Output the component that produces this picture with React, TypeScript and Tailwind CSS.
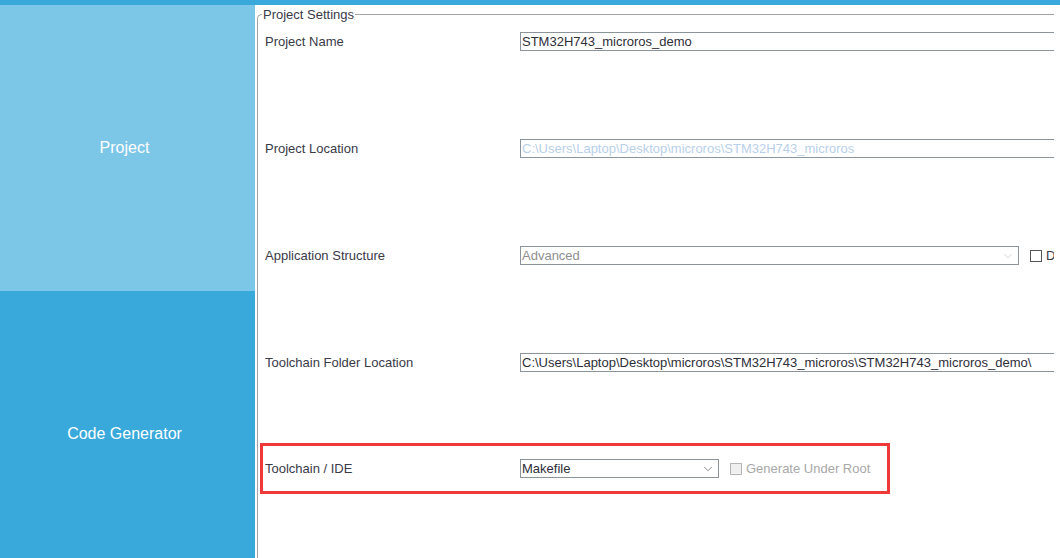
import { ChevronDown } from 'lucide-react'

const font = { fontFamily: '"Liberation Sans", Arial, sans-serif' }

function Field({ value, tone = 'normal', width = 'w-[560px]' }: { value: string; tone?: 'normal' | 'muted'; width?: string }) {
  return (
    <div
      className={`${width} h-[19px] shrink-0 border border-[#8c949b] bg-white pl-[1px] text-[13px] leading-[17px] whitespace-nowrap ${
        tone === 'muted' ? 'text-[#b9d0ea]' : 'text-[#2e2e38]'
      }`}
    >
      {value}
    </div>
  )
}

function Select({ value, disabled, width }: { value: string; disabled?: boolean; width: string }) {
  return (
    <div
      className={`${width} h-[19px] shrink-0 border border-[#8c949b] bg-white pl-[1px] pr-[3px] flex items-center justify-between text-[13px] ${
        disabled ? 'text-[#8f8f8f]' : 'text-[#2e2e38]'
      }`}
    >
      <span>{value}</span>
      <ChevronDown size={14} strokeWidth={1.2} className={disabled ? 'text-[#c4c4c4]' : 'text-[#5a5a5a]'} />
    </div>
  )
}

function Row({ label, children }: { label: string; children: React.ReactNode }) {
  return (
    <div className="flex items-center h-[19px] whitespace-nowrap">
      <span className="w-[255px] shrink-0 text-[13px] text-[#3a3a48]">{label}</span>
      {children}
    </div>
  )
}

export default function App() {
  return (
    <div className="w-[1060px] h-[558px] bg-white overflow-hidden flex flex-col" style={font}>
      {/* Top strip */}
      <div className="h-[5px] bg-[#39a9db] shrink-0" />

      <div className="flex flex-1 min-h-0">
        {/* Sidebar */}
        <div className="w-[255px] shrink-0 flex flex-col">
          <div className="h-[286px] shrink-0 bg-[#7cc6e8] flex items-center justify-center pr-[6px] text-white text-[16px]">
            Project
          </div>
          <div className="h-[286px] shrink-0 bg-[#39a9db] flex items-center justify-center pr-[6px] text-white text-[16px]">
            Code Generator
          </div>
        </div>

        {/* Settings panel */}
        <div className="w-[799px] shrink-0 pl-[2px] overflow-hidden">
          <fieldset className="mt-[2px] h-[600px] border-l border-t border-[#a3a3a3] rounded-tl-[5px] pl-[7px]">
            <legend className="-ml-[3px] px-[1px] text-[13px] leading-[15px] text-[#3a3a48]">Project Settings</legend>

            <div className="flex flex-col pt-[10px]">
              <Row label="Project Name">
                <Field value="STM32H743_microros_demo" />
              </Row>
              <div className="h-[88px]" />
              <Row label="Project Location">
                <Field value="C:\Users\Laptop\Desktop\microros\STM32H743_microros" tone="muted" />
              </Row>
              <div className="h-[88px]" />
              <Row label="Application Structure">
                <Select value="Advanced" disabled width="w-[499px]" />
                <div className="ml-[11px] w-[12px] h-[12px] border border-[#555] bg-white shrink-0" />
                <span className="ml-[4px] text-[13px] text-[#3a3a48]">Do not generate the main()</span>
              </Row>
              <div className="h-[88px]" />
              <Row label="Toolchain Folder Location">
                <Field value="C:\Users\Laptop\Desktop\microros\STM32H743_microros\STM32H743_microros_demo\" />
              </Row>
              <div className="h-[71px]" />

              {/* Highlighted row */}
              <div className="-ml-[5px] w-[630px] h-[51px] border-[3px] border-[#f03a3a] pl-[2px] pt-[13px]">
                <Row label="Toolchain / IDE">
                  <Select value="Makefile" width="w-[199px]" />
                  <div className="ml-[11px] w-[12px] h-[12px] border border-[#b5b5b5] bg-[#f0f0f0] shrink-0" />
                  <span className="ml-[4px] text-[13px] text-[#a8a8a8]">Generate Under Root</span>
                </Row>
              </div>
            </div>
          </fieldset>
        </div>
      </div>
    </div>
  )
}
